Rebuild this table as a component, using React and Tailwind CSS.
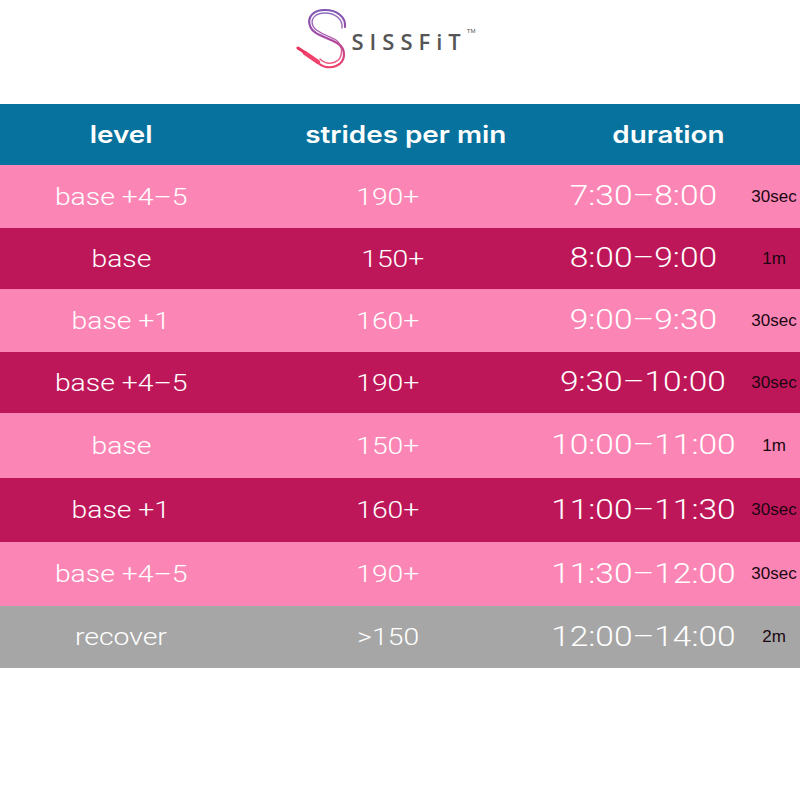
import React from "react";

const rows = [
  { level: "base +4–5", spm: "190+", dur: "7:30–8:00", note: "30sec", bg: "bg-[#fb86b5]", h: "h-[63px]" },
  { level: "base", spm: "150+", dur: "8:00–9:00", note: "1m", bg: "bg-[#be1759]", h: "h-[61px]", shift: true },
  { level: "base +1", spm: "160+", dur: "9:00–9:30", note: "30sec", bg: "bg-[#fb86b5]", h: "h-[63px]" },
  { level: "base +4–5", spm: "190+", dur: "9:30–10:00", note: "30sec", bg: "bg-[#be1759]", h: "h-[61px]" },
  { level: "base", spm: "150+", dur: "10:00–11:00", note: "1m", bg: "bg-[#fb86b5]", h: "h-[65px]" },
  { level: "base +1", spm: "160+", dur: "11:00–11:30", note: "30sec", bg: "bg-[#be1759]", h: "h-[64px]" },
  { level: "base +4–5", spm: "190+", dur: "11:30–12:00", note: "30sec", bg: "bg-[#fb86b5]", h: "h-[64px]" },
  { level: "recover", spm: ">150", dur: "12:00–14:00", note: "2m", bg: "bg-[#a6a6a6]", h: "h-[62px]" },
];

function Logo() {
  return (
    <div className="flex items-center">
      <svg width="58" height="66" viewBox="0 0 58 66" className="mr-[1px]">
        <defs>
          <linearGradient id="rope" x1="0" y1="0" x2="0" y2="1">
            <stop offset="0" stopColor="#7d55b5" />
            <stop offset="0.45" stopColor="#a34ca8" />
            <stop offset="1" stopColor="#ef3d6a" />
          </linearGradient>
        </defs>
        <path
          d="M52 22 C53 12 44 5 32 5 C20 5 14 12 17 21 C20 30 34 32 44 38 C54 44 53 57 43 61 C35 64 28 61 24 57"
          fill="none"
          stroke="url(#rope)"
          strokeWidth="2.2"
          strokeLinecap="round"
        />
        <path
          d="M49 23 C50 14 42 8 32 8 C22 8 17 14 20 21 C23 28 35 30 43 35 C51 41 50 54 42 57 C35 60 30 57 27 54"
          fill="none"
          stroke="url(#rope)"
          strokeWidth="1.4"
          strokeLinecap="round"
          opacity="0.85"
        />
        <path d="M25 57 L12 48" stroke="#f0426c" strokeWidth="4.5" strokeLinecap="round" />
        <path d="M11 47 L5 43" stroke="#e8335e" strokeWidth="3" strokeLinecap="round" />
      </svg>
      <div className="flex items-start mt-[6px]">
        <span
          className="text-[22px] font-semibold tracking-[6px] text-[#555555] leading-none"
          style={{ fontFamily: '"Open Sans", "Liberation Sans", sans-serif' }}
        >
          SISSFiT
        </span>
        <span className="text-[6px] text-[#555555] leading-none -mt-[2px]" style={{ fontFamily: '"Liberation Sans", sans-serif' }}>
          TM
        </span>
      </div>
    </div>
  );
}

export default function App() {
  const roboto = { fontFamily: 'Roboto, "Liberation Sans", sans-serif' };
  return (
    <div className="w-[800px] h-[800px] bg-white overflow-hidden">
      <div className="h-[104px] flex justify-center items-start pt-[5px] pr-[32px]">
        <Logo />
      </div>
      <div
        className="h-[61px] bg-[#07729d] flex items-center text-white text-[24px] font-semibold"
        style={{ fontFamily: 'Inter, "Liberation Sans", sans-serif' }}
      >
        <div className="w-[242px] flex justify-center">
          <span className="inline-block scale-x-[1.16]">level</span>
        </div>
        <div className="w-[328px] flex justify-center">
          <span className="inline-block scale-x-[1.16]">strides per min</span>
        </div>
        <div className="w-[196px] flex justify-center">
          <span className="inline-block scale-x-[1.16]">duration</span>
        </div>
      </div>
      {rows.map((r, i) => (
        <div key={i} className={`${r.h} ${r.bg} flex items-center text-white font-light`} style={roboto}>
          <div className="w-[242px] flex justify-center text-[24px]">
            <span className="inline-block scale-x-[1.18]">{r.level}</span>
          </div>
          <div className={`w-[292px] flex justify-center text-[24px] ${r.shift ? "pl-[10px]" : ""}`}>
            <span className="inline-block scale-x-[1.18]">{r.spm}</span>
          </div>
          <div className="w-[218px] flex justify-center text-[27px]">
            <span className="inline-block scale-x-[1.24]">{r.dur}</span>
          </div>
          <div
            className="w-[52px] -ml-[4px] flex justify-center text-[17px] text-[#1a0610] font-normal"
            style={{ fontFamily: '"Liberation Sans", Arial, sans-serif' }}
          >
            <span>{r.note}</span>
          </div>
        </div>
      ))}
    </div>
  );
}
